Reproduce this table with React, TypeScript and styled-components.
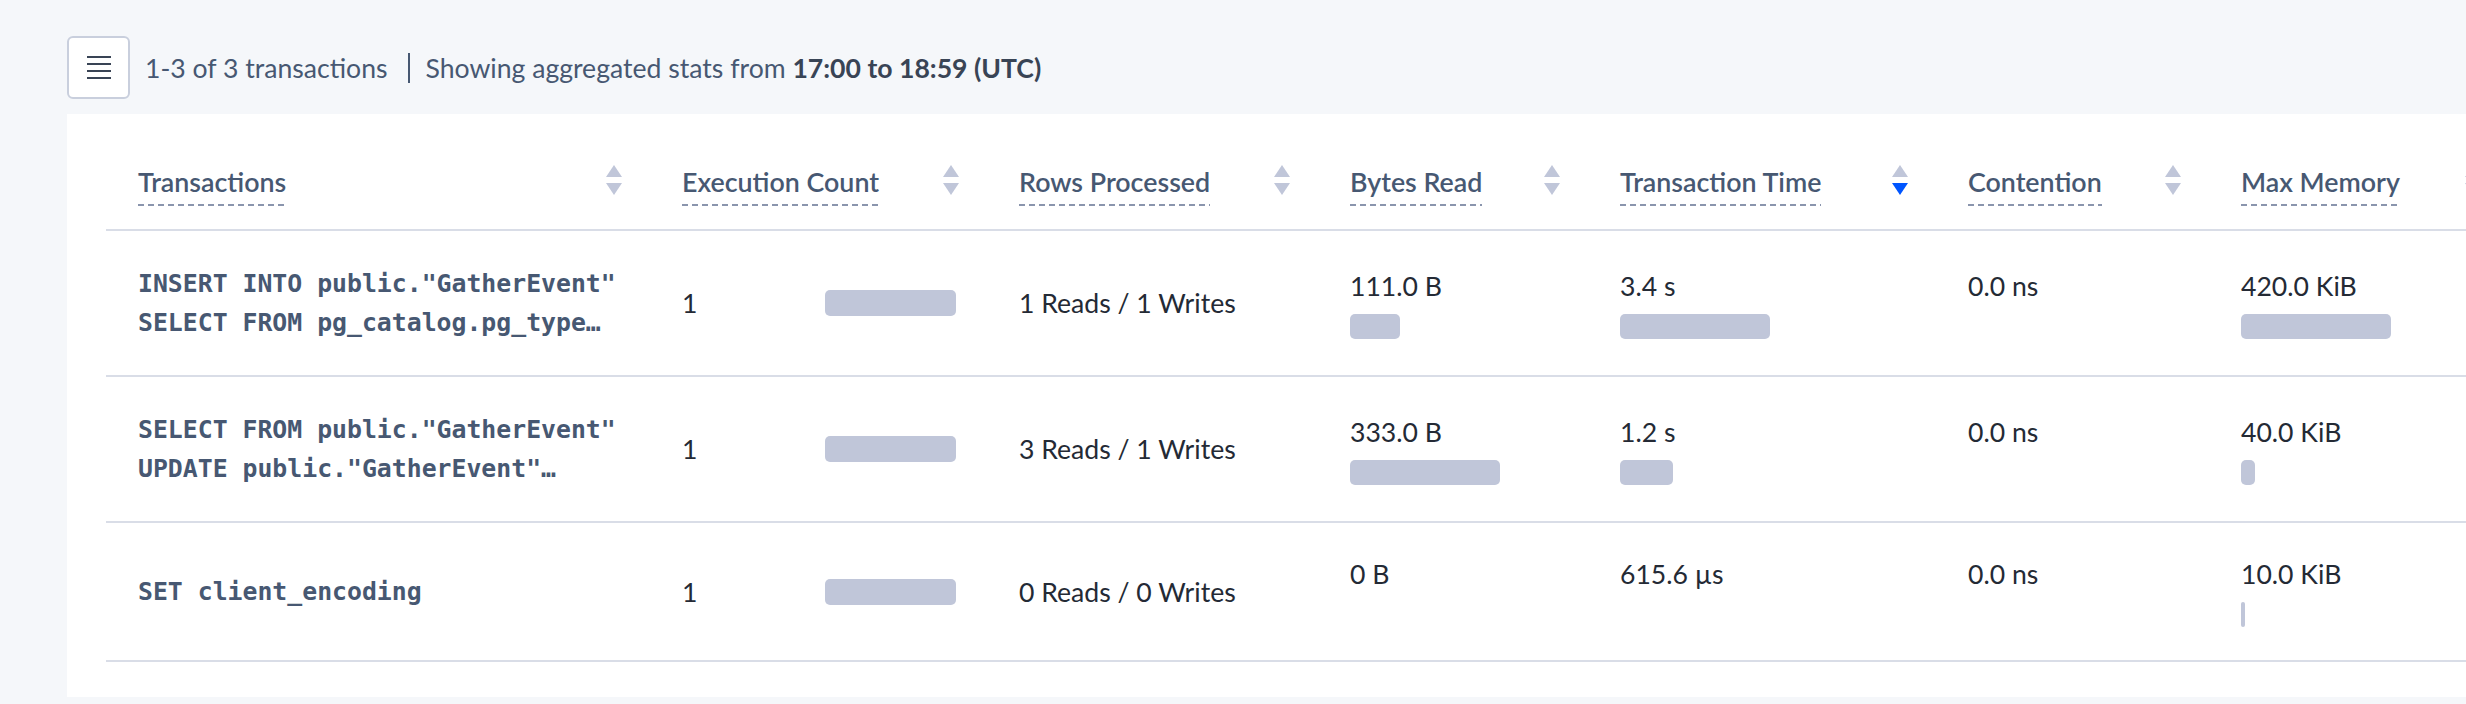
import React from "react";
import styled, { createGlobalStyle } from "styled-components";

const GlobalStyle = createGlobalStyle`
  html, body {
    margin: 0;
    padding: 0;
    background: #f5f7fa;
    overflow: hidden;
  }
  body {
    font-family: Lato, "Liberation Sans", sans-serif;
    color: #475872;
  }
`;

const Page = styled.div`
  padding: 36px 0 0 67px;
  width: 2399px;
`;

const Toolbar = styled.div`
  display: flex;
  align-items: center;
  height: 63px;
`;

const MenuButton = styled.button`
  width: 63px;
  height: 63px;
  box-sizing: border-box;
  border: 2px solid #c9cfdd;
  border-radius: 6px;
  background: #ffffff;
  display: flex;
  align-items: center;
  justify-content: center;
  padding: 0;
  margin: 0 15px 0 0;
  cursor: pointer;
`;

const Summary = styled.div`
  display: flex;
  align-items: center;
  font-size: 26.6px;
  line-height: 36px;
  color: #475872;
  white-space: nowrap;
`;

const Divider = styled.span`
  display: inline-block;
  width: 2px;
  height: 30px;
  background: #475872;
  margin: 0 16px 0 20px;
`;

const Strong = styled.b`
  font-weight: 700;
  color: #394455;
`;

const Panel = styled.div`
  margin-top: 15px;
  background: #ffffff;
  padding: 0 0 35px 39px;
  overflow: hidden;
`;

const Table = styled.table`
  border-collapse: collapse;
  table-layout: fixed;
  width: 2403px;
`;

const HeadCell = styled.th`
  padding: 50px 28px 23px 32px;
  border-bottom: 2px solid #d9dde7;
  text-align: left;
  vertical-align: bottom;
`;

const HeadInner = styled.div`
  display: flex;
  align-items: flex-start;
  justify-content: space-between;
`;

const HeadLabel = styled.span`
  font-size: 26.8px;
  line-height: 36px;
  font-weight: 600;
  color: #475872;
  padding-bottom: 6px;
  background-image: repeating-linear-gradient(
    to right,
    #8a95ad 0,
    #8a95ad 6px,
    transparent 6px,
    transparent 10px
  );
  background-repeat: no-repeat;
  background-size: 100% 2px;
  background-position: left bottom;
  white-space: nowrap;
`;

const SortIcon = styled.svg`
  flex: none;
  width: 16px;
  height: 31px;
  margin-top: 1px;
`;

const Row = styled.tr`
  border-bottom: 2px solid #d9dde7;
`;

const Cell = styled.td`
  padding: 33px 28px 33px 32px;
  vertical-align: middle;
  font-size: 26.6px;
  line-height: 36px;
  color: #242a35;
  white-space: nowrap;
`;

const SqlLine = styled.div`
  font-family: "DejaVu Sans Mono", "Liberation Mono", monospace;
  font-size: 24.8px;
  line-height: 39px;
  font-weight: 600;
  color: #475872;
  white-space: nowrap;
`;

const CountWrap = styled.div`
  display: flex;
  align-items: center;
`;

const CountValue = styled.span`
  flex: 1;
`;

const Bar = styled.div`
  height: 26px;
  border-radius: 5px;
  background: #c0c6d9;
`;

const CountBar = styled(Bar)`
  width: 131px;
  margin-right: 3px;
`;

const BarTrack = styled.div`
  height: 25px;
  margin-top: 10px;
  display: flex;
`;

const Menu = () => (
  <svg width="24" height="23" viewBox="0 0 24 23">
    {[1, 8, 15, 22].map((y) => (
      <rect key={y} x="0" y={y - 1} width="24" height="2" fill="#394455" />
    ))}
  </svg>
);

const Sort = ({ active }: { active?: boolean }) => (
  <SortIcon viewBox="0 0 16 31">
    <polygon points="8,0 16,12 0,12" fill="#c0c6d9" />
    <polygon points="0,18 16,18 8,30" fill={active ? "#0055ff" : "#c0c6d9"} />
  </SortIcon>
);

type RowData = {
  sql: string[];
  count: string;
  rows: string;
  bytes: [string, number];
  time: [string, number];
  contention: [string, number];
  mem: [string, number];
};

const data: RowData[] = [
  {
    sql: ['INSERT INTO public."GatherEvent"', "SELECT FROM pg_catalog.pg_type…"],
    count: "1",
    rows: "1 Reads / 1 Writes",
    bytes: ["111.0 B", 111 / 333],
    time: ["3.4 s", 1],
    contention: ["0.0 ns", 0],
    mem: ["420.0 KiB", 1],
  },
  {
    sql: ['SELECT FROM public."GatherEvent"', 'UPDATE public."GatherEvent"…'],
    count: "1",
    rows: "3 Reads / 1 Writes",
    bytes: ["333.0 B", 1],
    time: ["1.2 s", 1.2 / 3.4],
    contention: ["0.0 ns", 0],
    mem: ["40.0 KiB", 40 / 420],
  },
  {
    sql: ["SET client_encoding"],
    count: "1",
    rows: "0 Reads / 0 Writes",
    bytes: ["0 B", 0],
    time: ["615.6 µs", 0.0006156 / 3.4],
    contention: ["0.0 ns", 0],
    mem: ["10.0 KiB", 10 / 420],
  },
];

const columns = [
  { label: "Transactions", width: 544 },
  { label: "Execution Count", width: 337 },
  { label: "Rows Processed", width: 331 },
  { label: "Bytes Read", width: 270 },
  { label: "Transaction Time", width: 348, active: true },
  { label: "Contention", width: 273 },
  { label: "Max Memory", width: 300 },
];

const ValueBar = ({ value }: { value: [string, number] }) => (
  <>
    <div>{value[0]}</div>
    <BarTrack>
      {value[1] > 0 && <Bar style={{ width: `${value[1] * 150}px`, height: "25px" }} />}
    </BarTrack>
  </>
);

export default function App() {
  return (
    <>
      <GlobalStyle />
      <Page>
        <Toolbar>
          <MenuButton aria-label="columns">
            <Menu />
          </MenuButton>
          <Summary>
            1-3 of 3 transactions
            <Divider />
            Showing aggregated stats from&nbsp;<Strong>17:00 to 18:59 (UTC)</Strong>
          </Summary>
        </Toolbar>
        <Panel>
          <Table>
            <colgroup>
              {columns.map((c) => (
                <col key={c.label} style={{ width: `${c.width}px` }} />
              ))}
            </colgroup>
            <thead>
              <tr>
                {columns.map((c) => (
                  <HeadCell key={c.label}>
                    <HeadInner>
                      <HeadLabel>{c.label}</HeadLabel>
                      <Sort active={c.active} />
                    </HeadInner>
                  </HeadCell>
                ))}
              </tr>
            </thead>
            <tbody>
              {data.map((r, i) => (
                <Row key={i}>
                  <Cell>
                    {r.sql.map((l) => (
                      <SqlLine key={l}>{l}</SqlLine>
                    ))}
                  </Cell>
                  <Cell>
                    <CountWrap>
                      <CountValue>{r.count}</CountValue>
                      <CountBar />
                    </CountWrap>
                  </Cell>
                  <Cell>{r.rows}</Cell>
                  <Cell>
                    <ValueBar value={r.bytes} />
                  </Cell>
                  <Cell>
                    <ValueBar value={r.time} />
                  </Cell>
                  <Cell>
                    <ValueBar value={r.contention} />
                  </Cell>
                  <Cell>
                    <ValueBar value={r.mem} />
                  </Cell>
                </Row>
              ))}
            </tbody>
          </Table>
        </Panel>
      </Page>
    </>
  );
}
